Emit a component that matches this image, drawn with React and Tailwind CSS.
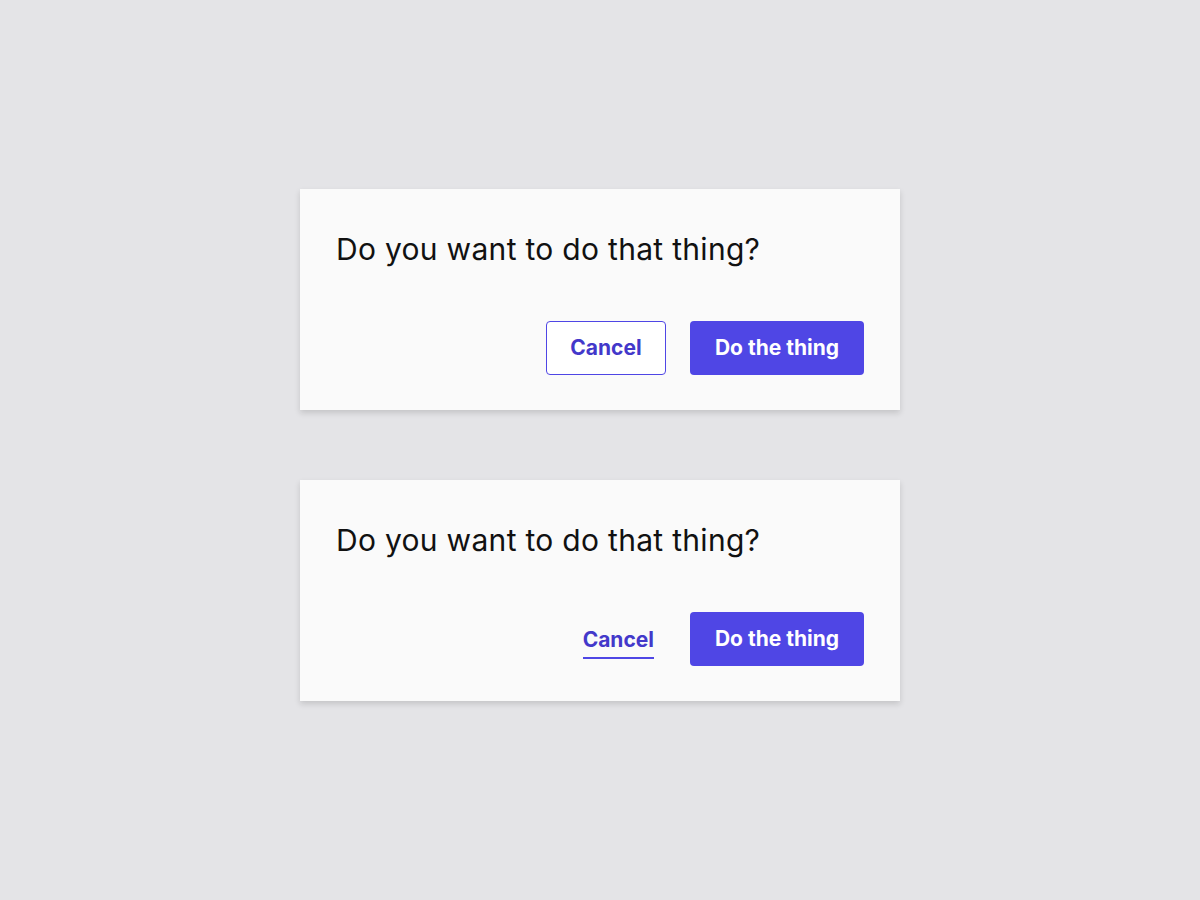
import React from 'react';

const font = { fontFamily: 'Inter, "Noto Sans", sans-serif' };

const Dialog = ({ linkCancel }) => (
  <div className="w-[600px] bg-[#fafafa] px-9 pt-[42px] pb-[35px] shadow-[0_3px_6px_rgba(0,0,0,0.14)]">
    <h2 className="text-[30px] leading-[36px] tracking-[0.3px] font-normal text-[#111111]">Do you want to do that thing?</h2>
    <div className="mt-[54px] flex items-center justify-end">
      {linkCancel ? (
        <button className="mr-9 text-[21px] leading-[28px] font-bold text-[#4338ca]">
          <span className="block border-b-2 border-[#4f46e5] pb-[3px] mt-[6px]">Cancel</span>
        </button>
      ) : (
        <button className="mr-6 h-[54px] w-[120px] rounded-[4px] border border-[#4f46e5] bg-white text-[21px] font-bold text-[#4338ca]">
          Cancel
        </button>
      )}
      <button className="h-[54px] w-[174px] rounded-[4px] bg-[#4f46e5] text-[21px] font-bold text-white">
        Do the thing
      </button>
    </div>
  </div>
);

export default function App() {
  return (
    <div className="min-h-[900px] bg-[#e4e4e7] flex flex-col items-center pt-[189px] gap-[70px]" style={font}>
      <Dialog />
      <Dialog linkCancel />
    </div>
  );
}
